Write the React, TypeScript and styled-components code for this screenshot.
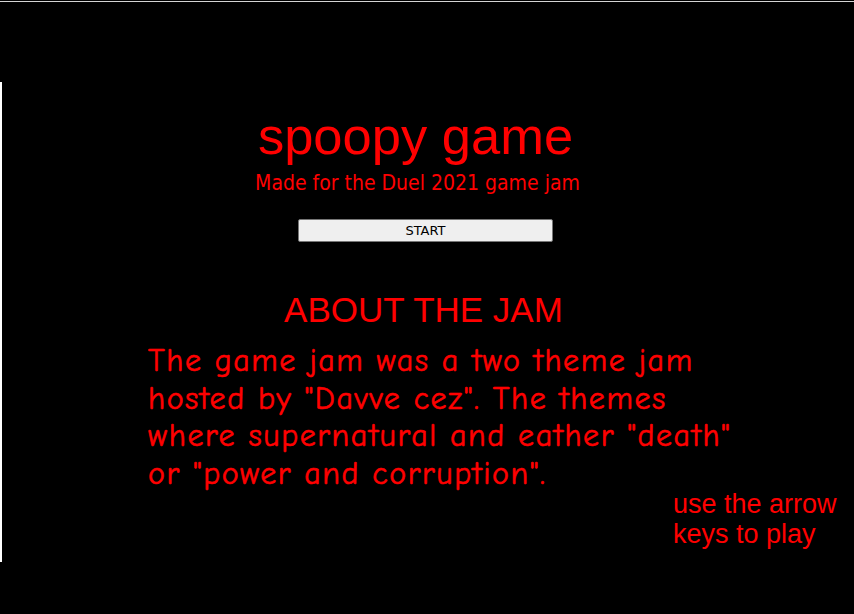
import React from 'react';
import styled, {createGlobalStyle} from "styled-components";

const GlobalStyle = createGlobalStyle`
  html, body {
    margin: 0;
    padding: 0;
    background-color: #000;
  }
  body {
    min-height: 614px;
    overflow: hidden;
  }
`

export default function App() {
    return (
        <Page>
            <GlobalStyle/>
            <TopRule/>
            <Stage>
                <Hero>
                    <Title>spoopy game</Title>
                    <Subtitle>Made for the Duel 2021 game jam</Subtitle>
                </Hero>
                <StartButton type="button">START</StartButton>

                <SectionHeading>ABOUT THE JAM</SectionHeading>
                <About>
                    The game jam was a two theme jam hosted by "Davve cez". The themes where supernatural and
                    eather "death" or "power and corruption".
                </About>

                <Hint>use the arrow keys to play</Hint>
            </Stage>
        </Page>
    );
}

const Page = styled.div`
  background-color: #000;
  min-height: 614px;
  padding-top: 1px;
`

const TopRule = styled.div`
  height: 1px;
  background-color: #d4d4d4;
`

const Stage = styled.main`
  display: flex;
  flex-direction: column;
  align-items: center;

  height: 480px;
  margin-top: 80px;
  border-left: 2px solid #fff;
  box-sizing: border-box;
`

const Hero = styled.header`
  display: flex;
  flex-direction: column;
  align-items: center;
  margin-top: 23px;
  padding-right: 25px;
`

const Title = styled.h1`
  margin: 0;
  color: red;
  font-family: "Liberation Sans", Arial, sans-serif;
  font-size: 52.5px;
  font-weight: 400;
  line-height: normal;
`

const Subtitle = styled.p`
  margin: 5px 0 0 0;
  color: red;
  font-family: "DejaVu Sans Condensed", "DejaVu Sans", sans-serif;
  font-stretch: condensed;
  font-size: 21px;
  line-height: normal;
  margin-left: 4px;
`

const StartButton = styled.button`
  width: 255px;
  height: 23px;
  margin: 24px 5px 0 0;
  padding: 0;

  background-color: #efefef;
  border: 1px solid #767676;
  border-radius: 2px;
  color: #000;
  font-family: "DejaVu Sans", sans-serif;
  font-size: 13px;
  cursor: pointer;
`

const SectionHeading = styled.h2`
  margin: 48px 9px 0 0;
  color: red;
  font-family: "Liberation Sans", Arial, sans-serif;
  font-size: 35px;
  font-weight: 400;
  line-height: normal;
`

const About = styled.p`
  align-self: flex-start;
  width: 605px;
  margin: 12px 0 0 146px;

  color: red;
  font-family: "Comic Sans MS", "Comic Neue", "DejaVu Sans", cursive;
  font-size: 32px;
  letter-spacing: 1.55px;
  line-height: 37.7px;
  -webkit-text-stroke: 0.6px red;
`

const Hint = styled.p`
  align-self: flex-end;
  width: 173px;
  margin: -4px 8px 0 0;

  color: red;
  font-family: "Liberation Sans", Arial, sans-serif;
  font-size: 27px;
  line-height: 30px;
`
